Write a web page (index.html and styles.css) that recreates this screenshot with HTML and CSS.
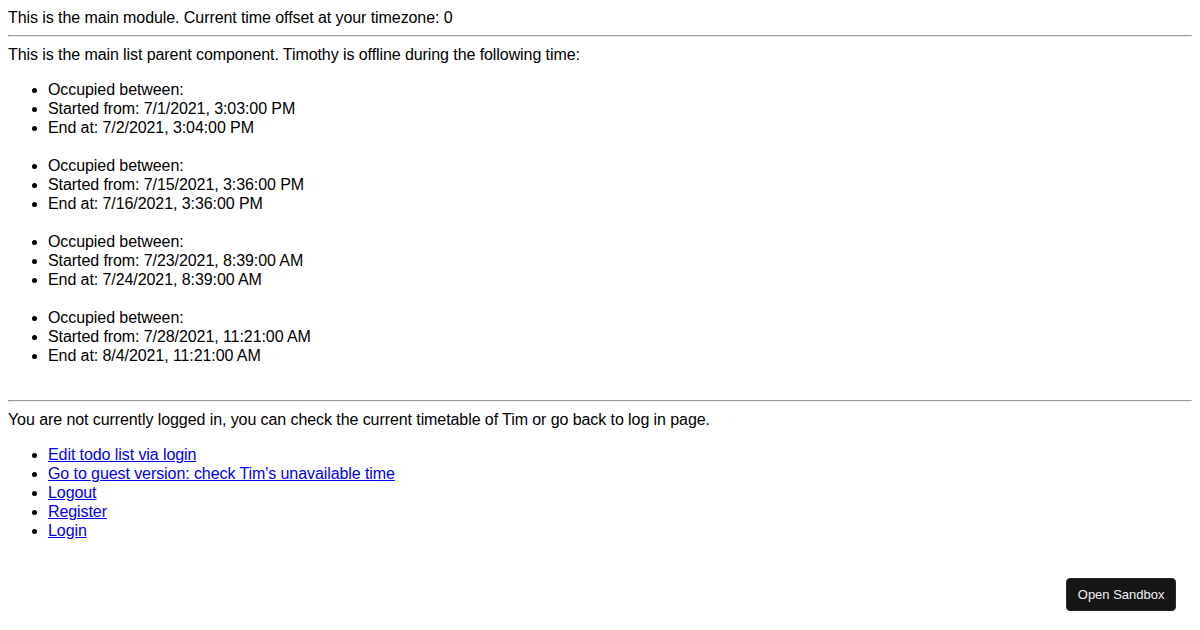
FILE: index.html
```html
<!DOCTYPE html>
<html lang="en">
<head>
  <meta charset="UTF-8">
  <title>Timetable</title>
  <meta name="viewport" content="width=device-width, initial-scale=1.0" />
  <link rel="stylesheet" href="styles.css">
</head>
<body>
  <div class="line">This is the main module. Current time offset at your timezone: 0</div>
  <hr>
  <div class="line">This is the main list parent component. Timothy is offline during the following time:</div>
  <div class="schedule">
    <ul class="slot">
      <li>Occupied between:</li>
      <li>Started from: 7/1/2021, 3:03:00 PM</li>
      <li>End at: 7/2/2021, 3:04:00 PM</li>
    </ul>
    <ul class="slot">
      <li>Occupied between:</li>
      <li>Started from: 7/15/2021, 3:36:00 PM</li>
      <li>End at: 7/16/2021, 3:36:00 PM</li>
    </ul>
    <ul class="slot">
      <li>Occupied between:</li>
      <li>Started from: 7/23/2021, 8:39:00 AM</li>
      <li>End at: 7/24/2021, 8:39:00 AM</li>
    </ul>
    <ul class="slot">
      <li>Occupied between:</li>
      <li>Started from: 7/28/2021, 11:21:00 AM</li>
      <li>End at: 8/4/2021, 11:21:00 AM</li>
    </ul>
  </div>
  <hr>
  <div class="line">You are not currently logged in, you can check the current timetable of Tim or go back to log in page.</div>
  <ul class="nav">
    <li><a href="#">Edit todo list via login</a></li>
    <li><a href="#">Go to guest version: check Tim's unavailable time</a></li>
    <li><a href="#">Logout</a></li>
    <li><a href="#">Register</a></li>
    <li><a href="#">Login</a></li>
  </ul>

  <a class="sandbox-btn" href="#">Open Sandbox</a>
</body>
</html>
```

FILE: styles.css
```css
body { font-family: "Liberation Sans", Arial, sans-serif; font-size: 16px; line-height: 19px; letter-spacing: -0.08px; color: #000; margin: 8px; }
hr { margin: 8px 0; }
ul { margin: 16px 0; padding-left: 40px; }
a { color: #0000ee; }
.schedule { display: flow-root; margin: 16px 0; }
.schedule .slot { margin: 0 0 19px; }
.nav { margin-top: 16px; }
.sandbox-btn {
  position: fixed;
  right: 24px;
  bottom: 19px;
  background: #151515;
  color: #f2f2f2;
  font-family: "Liberation Sans", Arial, sans-serif;
  font-size: 13px;
  line-height: 15px;
  letter-spacing: 0;
  padding: 8px 10.5px;
  border: 1px solid #2a2a2a;
  border-radius: 4px;
  text-decoration: none;
}
```
